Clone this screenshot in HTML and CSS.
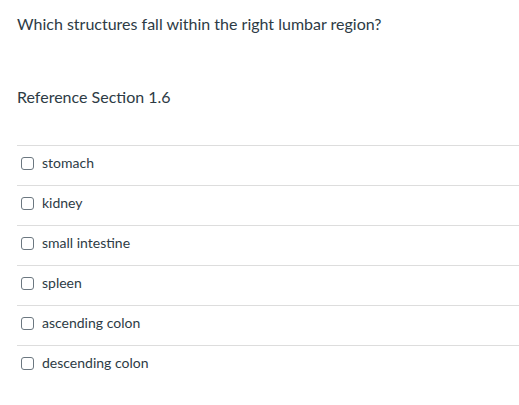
FILE: index.html
```html
<!DOCTYPE html>
<html>
<head>
<meta charset="utf-8">
<link rel="stylesheet" href="styles.css">
</head>
<body>
<div class="question">
  <div class="prompt">
    <p class="q-text">Which structures fall within the right lumbar region?</p>
    <p class="ref">Reference Section 1.6</p>
  </div>
  <ul class="answers">
    <li class="answer"><span class="box"></span><span class="label">stomach</span></li>
    <li class="answer"><span class="box"></span><span class="label">kidney</span></li>
    <li class="answer"><span class="box"></span><span class="label">small intestine</span></li>
    <li class="answer"><span class="box"></span><span class="label">spleen</span></li>
    <li class="answer"><span class="box"></span><span class="label">ascending colon</span></li>
    <li class="answer"><span class="box"></span><span class="label">descending colon</span></li>
  </ul>
</div>
</body>
</html>
```
FILE: styles.css
```css
html, body {
  margin: 0;
  padding: 0;
  background: #fff;
}
body {
  font-family: Lato, "Liberation Sans", sans-serif;
  color: #2d3b45;
}
.question {
  padding: 12px 0 0 17px;
}
.prompt p {
  margin: 0;
}
.q-text {
  font-size: 16px;
  line-height: 24px;
}
.ref {
  font-size: 16px;
  line-height: 24px;
  margin-top: 49px !important;
}
.answers {
  list-style: none;
  margin: 36px 0 0 0;
  padding: 0;
}
.answer {
  border-top: 1px solid #dddddd;
  box-sizing: content-box;
  display: flex;
  align-items: center;
  padding: 0 0 5px 4px;
  height: 34px;
  font-size: 14px;
}
.box {
  width: 11px;
  height: 11px;
  border: 1px solid #6b7780;
  border-radius: 3px;
  margin-right: 8px;
  flex: none;
}
.label {
  line-height: 20px;
}
```
